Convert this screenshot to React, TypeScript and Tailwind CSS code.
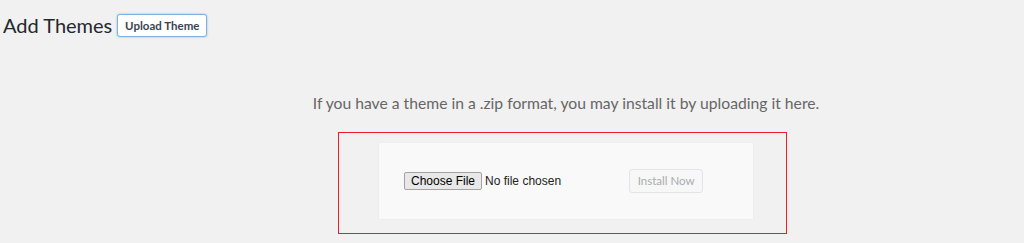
import React from 'react';

const AddThemes = () => {
  return (
    <div className="w-full h-[243px] bg-[#f1f1f1] overflow-hidden font-['Lato',sans-serif] text-[#23282d]">
      <div className="flex items-center pt-[14px] pl-[3px]">
        <h1 className="text-[20px] leading-[23px] font-normal">Add Themes</h1>
        <button className="ml-[5px] h-[23px] w-[90px] bg-white border border-[#7fb1e0] rounded-[3px] text-[11.5px] font-bold text-[#3a4450] shadow-[0_0_2px_rgba(30,140,190,0.5)]">
          Upload Theme
        </button>
      </div>

      <p className="mt-[56px] pl-[108px] text-center text-[15.7px] leading-[20px] text-[#666]">
        If you have a theme in a .zip format, you may install it by uploading it here.
      </p>

      <div className="ml-[338px] mt-[19px] w-[449px] h-[102px] border border-[#ee1c25] pl-[39px] pt-[9px]">
        <div className="w-[376px] h-[78px] bg-[#f9f9f9] border border-[#eeeeee] flex items-center pl-[25px]">
          <span className="h-[18px] px-[6px] flex items-center bg-[#e8e8e8] border border-[#a3a3a3] rounded-[2px] font-['Liberation_Sans',sans-serif] text-[12px] text-black">
            Choose File
          </span>
          <span className="ml-[3px] font-['Liberation_Sans',sans-serif] text-[12px] text-[#222]">No file chosen</span>
          <button className="ml-[68px] h-[24px] w-[74px] bg-[#f7f7f7] border border-[#e2e4e7] rounded-[3px] text-[11.5px] text-[#a8acb0]">
            Install Now
          </button>
        </div>
      </div>
    </div>
  );
};

export default function App() {
  return <AddThemes />;
}
